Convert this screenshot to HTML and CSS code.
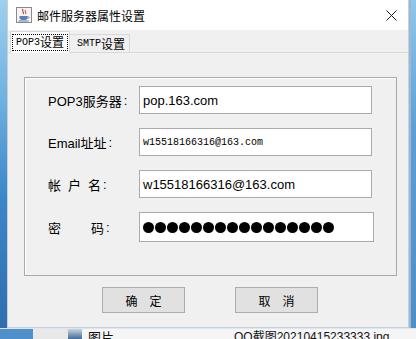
FILE: index.html
```html
<!DOCTYPE html>
<html lang="zh">
<head>
<meta charset="utf-8">
<title>邮件服务器属性设置</title>
<link rel="stylesheet" href="styles.css">
</head>
<body>
<div class="screen">
  <div class="main">
    <div class="edge-left"></div>
    <div class="window">
      <div class="titlebar">
        <svg class="appicon" width="16" height="16" viewBox="0 0 16 16">
          <rect x="0.5" y="0.5" width="15" height="15" fill="#f4f4f4" stroke="#8a8a8a"/>
          <path d="M7 2 C5 4 9 5 7 7" fill="none" stroke="#d2462c" stroke-width="1.2"/>
          <path d="M9.5 3 C8 4.5 11 5.5 9.5 7" fill="none" stroke="#d2462c" stroke-width="1"/>
          <path d="M3.5 9 H11.5 V11 C11.5 12.5 10 13 7.5 13 C5 13 3.5 12.5 3.5 11 Z" fill="#5a7fb0"/>
          <path d="M11.5 9.5 C13.5 9.5 13.5 11.5 11.5 11.5" fill="none" stroke="#5a7fb0" stroke-width="1"/>
          <path d="M2.5 14 H12.5" stroke="#5a7fb0" stroke-width="1"/>
        </svg>
        <span class="title">邮件服务器属性设置</span>
        <svg class="close" width="11" height="11" viewBox="0 0 11 11">
          <path d="M0.5 0.5 L10.5 10.5 M10.5 0.5 L0.5 10.5" stroke="#1a1a1a" stroke-width="1"/>
        </svg>
      </div>
      <div class="tabs">
        <div class="tab tab-active"><span class="focus"><span class="lat">POP3</span>设置</span></div>
        <div class="tab"><span class="lat">SMTP</span>设置</div>
      </div>
      <div class="tabpanel">
        <div class="group">
          <div class="row">
            <span class="label">POP3服务器<span class="colon">:</span></span>
            <div class="field">pop.163.com</div>
          </div>
          <div class="row">
            <span class="label">Email址址<span class="colon">:</span></span>
            <div class="field field-mono">w15518166316@163.com</div>
          </div>
          <div class="row">
            <span class="label"><span class="sp1">帐</span><span class="sp1">户</span>名<span class="colon">:</span></span>
            <div class="field">w15518166316@163.com</div>
          </div>
          <div class="row">
            <span class="label"><span class="sp2">密</span>码<span class="colon">:</span></span>
            <div class="field field-pass">
              <span class="dot"></span><span class="dot"></span><span class="dot"></span><span class="dot"></span>
              <span class="dot"></span><span class="dot"></span><span class="dot"></span><span class="dot"></span>
              <span class="dot"></span><span class="dot"></span><span class="dot"></span><span class="dot"></span>
              <span class="dot"></span><span class="dot"></span><span class="dot"></span><span class="dot"></span>
            </div>
          </div>
        </div>
        <div class="buttons">
          <button class="btn">确　定</button>
          <button class="btn">取　消</button>
        </div>
      </div>
    </div>
    <div class="edge-right"></div>
  </div>
  <div class="taskrow">
    <div class="task-blue"></div>
    <div class="task-gap"></div>
    <div class="task-icon"></div>
    <span class="task-name">图片</span>
    <span class="task-file">QQ截图20210415233333.jpg</span>
  </div>
</div>
</body>
</html>
```
FILE: styles.css
```css
* { box-sizing: border-box; }
body { margin: 0; }
.screen {
  width: 416px;
  height: 339px;
  overflow: hidden;
  background: #5f9fd2;
  font-family: "Liberation Sans", "Noto Sans CJK SC", sans-serif;
}
.main { display: flex; height: 328px; }
.edge-left {
  width: 7px;
  background: linear-gradient(180deg, #9fd0ee 0%, #6fb2e0 30%, #3c86c8 60%, #2f6fb0 100%);
}
.edge-right {
  width: 7px;
  background: linear-gradient(180deg, #8fc8ec 0%, #5d9ed6 40%, #4f8fc8 100%);
  border-left: 2px solid #9db7cf;
}
.window {
  width: 402px;
  background: #f0f0f0;
  border: 1px solid #c5d0dc;
  border-top: 0;
  display: flex;
  flex-direction: column;
}
.titlebar {
  height: 30px;
  background: #fff;
  display: flex;
  align-items: center;
  padding: 0 11px 0 8px;
}
.appicon { flex: none; }
.title {
  margin-left: 5px;
  font-size: 12px;
  color: #000;
  flex: 1;
}
.close { flex: none; }
.tabs {
  height: 23px;
  display: flex;
  align-items: flex-end;
  padding-left: 2px;
  border-bottom: 1px solid #d9d9d9;
  font-family: "Liberation Mono", "Noto Sans CJK SC", monospace;
  font-size: 12px;
}
.lat { font-size: 10px; }
.tab {
  height: 18px;
  padding: 0 4px 0 7px;
  border: 1px solid #d9d9d9;
  border-bottom: 0;
  background: #f0f0f0;
  display: flex;
  align-items: center;
}
.tab-active {
  padding: 1px 1px 2px;
  background: #fbfbfb;
  margin-right: -1px;
  margin-bottom: -1px;
  height: 22px;
  position: relative;
  z-index: 1;
}
.focus {
  display: flex;
  align-items: center;
  height: 17px;
  padding: 0 3px;
  border: 1px dotted #000;
}
.tabpanel {
  flex: 1;
  padding: 24px 0 0 16px;
}
.group {
  width: 373px;
  height: 199px;
  border: 1px solid #a9a9a9;
  box-shadow: inset 1px 1px 0 #fff;
  padding: 8px 0 0 23px;
  display: flex;
  flex-direction: column;
  gap: 14px;
}
.row {
  display: flex;
  align-items: center;
  height: 28px;
}
.label {
  width: 91px;
  font-size: 13px;
  color: #000;
  display: flex;
  align-items: center;
}
.colon { margin-left: 2px; }
.sp1 { margin-right: 7px; }
.sp2 { margin-right: 30px; }
.field {
  width: 233px;
  height: 28px;
  background: #fff;
  border: 1px solid #ababab;
  display: flex;
  align-items: center;
  padding-left: 3px;
  font-size: 13px;
  color: #000;
}
.field-mono {
  font-family: "Liberation Mono", monospace;
  font-size: 10px;
  color: #000;
}
.row:last-child { height: 30px; }
.field-pass {
  width: 235px;
  height: 30px;
  gap: 1px;
}
.dot {
  width: 11px;
  height: 11px;
  border-radius: 50%;
  background: #000;
}
.buttons {
  display: flex;
  gap: 50px;
  padding-left: 78px;
  margin-top: 11px;
}
.btn {
  width: 83px;
  height: 26px;
  background: #e1e1e1;
  border: 1px solid #adadad;
  font-family: "Liberation Sans", "Noto Sans CJK SC", sans-serif;
  font-size: 12px;
  color: #000;
  padding: 0;
}
.taskrow {
  height: 11px;
  display: flex;
  align-items: flex-start;
  background: #f5f5f5;
  border-top: 1px solid #dfe6ee;
  overflow: hidden;
}
.task-blue { width: 33px; height: 11px; background: #4f8fca; }
.task-gap { width: 35px; height: 11px; background: #e8e8e8; }
.task-icon { width: 14px; height: 11px; background: linear-gradient(#c8d4e0, #35608f); }
.task-name {
  margin-left: 6px;
  font-size: 13px;
  line-height: 15px;
  color: #111;
  margin-top: 1px;
}
.task-file {
  margin-left: 120px;
  font-size: 12px;
  line-height: 15px;
  color: #111;
  margin-top: 1px;
}
```
